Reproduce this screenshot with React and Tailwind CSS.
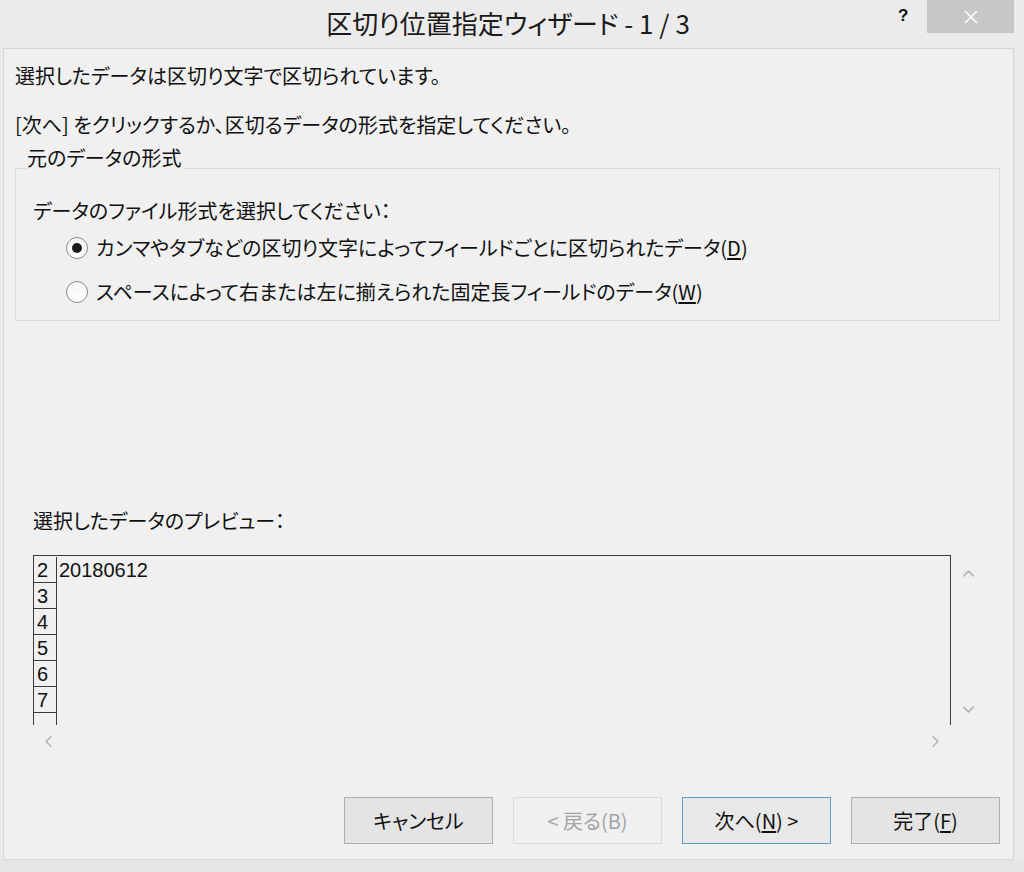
import { ChevronUp, ChevronDown, ChevronLeft, ChevronRight } from "lucide-react";

const jp = "font-['Noto_Sans_CJK_JP','Noto_Sans',sans-serif] [font-feature-settings:'palt']";

function Radio({ checked, children }) {
  return (
    <div className="flex items-center h-[24px]">
      <div className="ml-[50px] w-[22px] h-[22px] rounded-full border border-[#8a8a8a] bg-gradient-to-b from-[#f4f4f4] to-white flex items-center justify-center">
        {checked && <div className="w-[10px] h-[10px] rounded-full bg-[#1c1c1c]" />}
      </div>
      <span className="ml-[8px]">{children}</span>
    </div>
  );
}

function Button({ children, disabled, focused }) {
  let cls = "w-[149px] h-[47px] flex items-center justify-center text-[20px] border ";
  if (disabled) cls += "border-[#d9d9d9] bg-[#f0f0f0] text-[#a3a3a3]";
  else if (focused) cls += "border-[#5a9bd4] bg-[#e8e8e8] text-[#111]";
  else cls += "border-[#adadad] bg-[#e4e4e4] text-[#111]";
  return <div className={cls}>{children}</div>;
}

export default function App() {
  const rows = [2, 3, 4, 5, 6, 7, 8];

  return (
    <div className={`w-[1024px] h-[872px] bg-[#ebebeb] flex flex-col text-[#111] ${jp}`}>
      {/* title bar */}
      <div className="h-[48px] flex items-start">
        <div className="flex-1 pl-[126px] text-center text-[26px] leading-[46px] text-[#1a1a1a]">
          区切り位置指定ウィザード - 1 / 3
        </div>
        <div className="w-[134px] flex items-start">
          <span className="ml-[8px] mt-[3px] text-[17px] font-bold font-['Liberation_Sans',sans-serif]">?</span>
          <div className="ml-[19px] w-[87px] h-[33px] bg-[#c7c7c7] flex items-center justify-center">
            <svg width="14" height="14" viewBox="0 0 14 14">
              <path d="M1 1 L13 13 M13 1 L1 13" stroke="#fff" strokeWidth="1.5" />
            </svg>
          </div>
        </div>
      </div>

      {/* content panel */}
      <div className="ml-[3px] w-[1011px] h-[812px] border border-[#d6d6d6] bg-[#f0f0f0] text-[20px] leading-[24px] flex flex-col">
        <div className="ml-[11px] mt-[15px]">選択したデータは区切り文字で区切られています。</div>
        <div className="ml-[11px] mt-[25px]">[次へ] をクリックするか、区切るデータの形式を指定してください。</div>

        <div className="ml-[11px] mt-[31px] w-[985px] h-[153px] border border-[#dcdcdc]">
          <div className="-mt-[23px] ml-[11px] w-fit pr-[2px] bg-[#f0f0f0]">元のデータの形式</div>
          <div className="ml-[17px] mt-[29px]">データのファイル形式を選択してください：</div>
          <div className="mt-[13px]">
            <Radio checked>
              カンマやタブなどの区切り文字によってフィールドごとに区切られたデータ(<span className="underline underline-offset-2">D</span>)
            </Radio>
          </div>
          <div className="mt-[20px]">
            <Radio>
              スペースによって右または左に揃えられた固定長フィールドのデータ(<span className="underline underline-offset-2">W</span>)
            </Radio>
          </div>
        </div>

        <div className="ml-[29px] mt-[188px]">選択したデータのプレビュー：</div>

        {/* preview */}
        <div className="ml-[29px] mt-[22px] w-[952px] grid grid-cols-[918px_34px]">
          <div className="h-[170px] border-t border-l border-r border-[#3a3a3a] overflow-hidden pt-[1px] bg-[#f0f0f0]">
            {rows.map((n) => (
              <div key={n} className="flex h-[26px]">
                <div className="w-[23px] h-[26px] border-r border-b border-[#3a3a3a] pl-[3px] font-['Liberation_Sans',sans-serif] text-[20px] leading-[26px]">
                  {n < 8 ? n : ""}
                </div>
                <div className="pl-[2px] font-['Liberation_Sans',sans-serif] text-[20px] leading-[26px]">
                  {n === 2 ? "20180612" : ""}
                </div>
              </div>
            ))}
          </div>
          <div className="h-[170px] flex flex-col items-center justify-between pt-[9px] pb-[6px] text-[#b4b4b4]">
            <ChevronUp size={19} strokeWidth={2} />
            <ChevronDown size={19} strokeWidth={2} />
          </div>
          <div className="h-[32px] flex items-center justify-between px-[6px] text-[#b4b4b4]">
            <ChevronLeft size={19} strokeWidth={2} />
            <ChevronRight size={19} strokeWidth={2} />
          </div>
          <div className="h-[32px]" />
        </div>

        {/* buttons */}
        <div className="mt-[40px] mr-[13px] flex justify-end gap-[20px]">
          <Button>キャンセル</Button>
          <Button disabled>&lt; 戻る(B)</Button>
          <Button focused>
            次へ(<span className="underline underline-offset-2">N</span>) &gt;
          </Button>
          <Button>
            完了(<span className="underline underline-offset-2">F</span>)
          </Button>
        </div>
      </div>
      <div className="flex-1 bg-[#e6e6e6]" />
    </div>
  );
}
